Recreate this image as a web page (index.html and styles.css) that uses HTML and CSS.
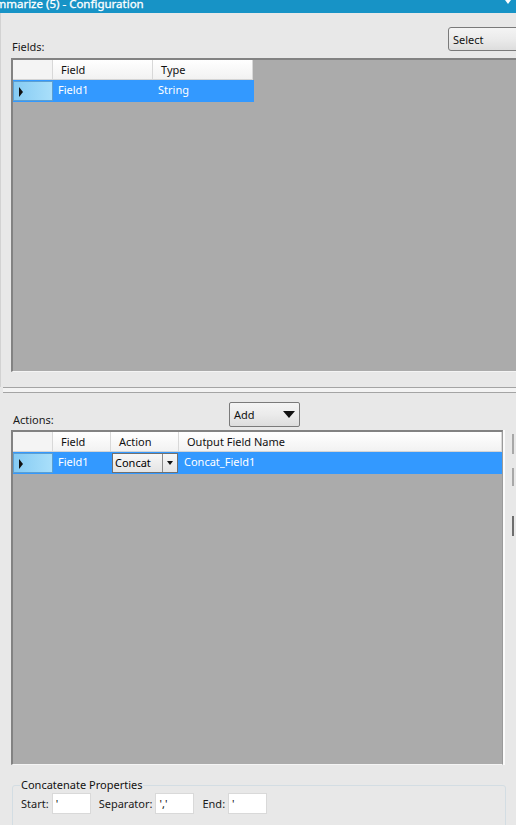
FILE: index.html
```html
<!DOCTYPE html>
<html lang="en">
<head>
    <meta charset="UTF-8">
    <title>Summarize (5) - Configuration</title>
    <link rel="stylesheet" href="styles.css">
</head>
<body>
    <div class="titlebar">
        <span class="title">Summarize (5) - Configuration</span>
        <span class="caret"></span>
    </div>

    <div class="top-pane">
        <div class="fields-head">
            <span class="label">Fields:</span>
            <button class="btn select-btn">Select</button>
        </div>
        <div class="grid fields-grid">
            <div class="row head">
                <div class="cell rh"></div>
                <div class="cell w100">Field</div>
                <div class="cell w100">Type</div>
            </div>
            <div class="row sel">
                <div class="cell rh"><span class="arrow"></span></div>
                <div class="cell w100">Field1</div>
                <div class="cell w100">String</div>
            </div>
        </div>
    </div>

    <div class="splitter"></div>

    <div class="bottom-pane">
        <div class="actions-head">
            <span class="label">Actions:</span>
            <button class="btn add-btn">Add <span class="tri"></span></button>
        </div>
        <div class="actions-body">
            <div class="grid actions-grid">
                <div class="row head">
                    <div class="cell rh"></div>
                    <div class="cell w58">Field</div>
                    <div class="cell w68">Action</div>
                    <div class="cell grow">Output Field Name</div>
                </div>
                <div class="row sel">
                    <div class="cell rh"><span class="arrow"></span></div>
                    <div class="cell w58">Field1</div>
                    <div class="cell w68 combo-cell">
                        <div class="combo"><span class="combo-text">Concat</span><span class="drop"><span class="tri small"></span></span></div>
                    </div>
                    <div class="cell grow">Concat_Field1</div>
                </div>
            </div>
            <div class="side">
                <span class="side-btn b1"></span>
                <span class="side-btn b2"></span>
                <span class="side-btn b3"></span>
            </div>
        </div>

        <fieldset class="props">
            <legend>Concatenate Properties</legend>
            <div class="props-row">
                <label>Start:</label><input value="'">
                <label>Separator:</label><input value="','">
                <label>End:</label><input value="'">
            </div>
        </fieldset>
    </div>
</body>
</html>
```

FILE: styles.css
```css
* { box-sizing: border-box; }
body {
    margin: 0; width: 516px; height: 825px; overflow: hidden;
    background: #e8e8e8; color: #1a1a1a;
    font-family: "Noto Sans", "Open Sans", sans-serif; font-size: 11px;
}

.titlebar { display: flex; justify-content: space-between; height: 13px; background: #1793c6; color: #fff; overflow: hidden; }
.title { font-size: 11.5px; line-height: 12px; margin: -2px 0 0 -18px; white-space: nowrap; -webkit-text-stroke: 0.3px #fff; }
.caret { width: 0; height: 0; border-left: 3px solid transparent; border-right: 3px solid transparent; border-top: 4px solid #fff; margin: 0 5px 0 0; }

.top-pane { height: 374px; border-left: 1px solid #d2d2d2; }
.fields-head { display: flex; justify-content: space-between; height: 45px; }
.label { line-height: 16px; }
.fields-head .label { padding: 26px 0 0 11px; }

.btn {
    font: inherit; color: #111; text-align: left; padding: 0 4px;
    border: 1px solid #7a7a7a; border-radius: 3px;
    background: linear-gradient(#f4f4f4, #ebebeb 50%, #dddddd);
}
.select-btn { margin: 14px -12px 0 0; width: 80px; height: 24px; }

.grid { background: #ababab; border-top: 2px solid #828282; border-left: 2px solid #828282; border-bottom: 1px solid #f4f4f4; }
.fields-grid { margin-left: 10px; height: 314px; margin-right: -10px; }
.fields-grid .row { width: fit-content; }

.row { display: flex; }
.row.head { height: 20px; background: linear-gradient(#ffffff, #f2f2f2); border-bottom: 1px solid #d4d4d4; color: #111; }
.row.sel { height: 22px; background: #3399ff; color: #fff; }
.cell { padding: 0 4px; line-height: 20px; border-right: 1px solid #d8d8d8; white-space: nowrap; overflow: hidden; }
.head .cell { padding-left: 8px; line-height: 19px; }
.sel .cell { border-right-color: #3399ff; }
.rh { width: 40px; }
.head .rh { background: #f4f4f4; }
.sel .rh { position: relative; margin: 1px 1px 1px 0; background: linear-gradient(90deg, #86cbf3, #a9dffa); border: 1px solid #5c9fd2; }
.arrow { position: absolute; left: 5px; top: 5px; width: 0; height: 0; border-top: 5px solid transparent; border-bottom: 5px solid transparent; border-left: 4px solid #111; }
.w100 { width: 100px; }
.w58 { width: 58px; }
.w68 { width: 68px; }
.grow { flex: 1; }

.splitter { height: 6px; border-top: 1px solid #a4a4a4; border-bottom: 1px solid #a4a4a4; background: #f3f3f3; margin-left: 3px; }

.actions-head { display: grid; grid-template-columns: 216px 71px; height: 37px; padding-left: 13px; }
.actions-head .label { padding-top: 19px; }
.add-btn { margin-top: 9px; height: 25px; display: flex; align-items: center; justify-content: space-between; padding-right: 4px; border-radius: 2px; }
.tri { width: 0; height: 0; border-left: 6px solid transparent; border-right: 6px solid transparent; border-top: 7px solid #111; }
.tri.small { border-left-width: 3px; border-right-width: 3px; border-top-width: 4px; }

.actions-body { display: flex; }
.actions-grid { margin-left: 11px; width: 494px; height: 335px; border-right: 1px solid #9a9a9a; box-shadow: 2px 0 0 #fbfbfb; }
.combo-cell { padding: 0; }
.combo {
    display: flex; width: 66px; height: 20px; margin-top: 1px;
    background: linear-gradient(#f7f7f7, #e4e4e4); border: 1px solid #707070; color: #000;
}
.combo-text { padding: 0 2px; line-height: 18px; }
.drop { margin-left: auto; width: 15px; border-left: 1px solid #8a8a8a; display: flex; align-items: center; justify-content: center; }

.side { display: flex; flex-direction: column; margin-left: 9px; }
.side-btn { width: 4px; border-left: 2px solid #a8a8a8; }
.b1 { margin-top: 4px; height: 20px; }
.b2 { margin-top: 14px; height: 18px; }
.b3 { margin-top: 30px; height: 20px; border-left-color: #6e6e6e; }

.props { margin: 13px 0 0 12px; width: 494px; height: 54px; padding: 0 7px; border: 1px solid #d3dde3; border-radius: 3px; }
.props legend { padding: 0 1px; line-height: 14px; color: #111; }
.props-row { display: flex; align-items: center; padding: 0 1px; margin-top: 1px; }
.props-row label { margin-right: 3px; }
.props-row input { width: 39px; height: 21px; margin-right: 8px; font: inherit; padding: 0 3px; border: 1px solid #d9d9d9; background: #fff; color: #111; }
```
